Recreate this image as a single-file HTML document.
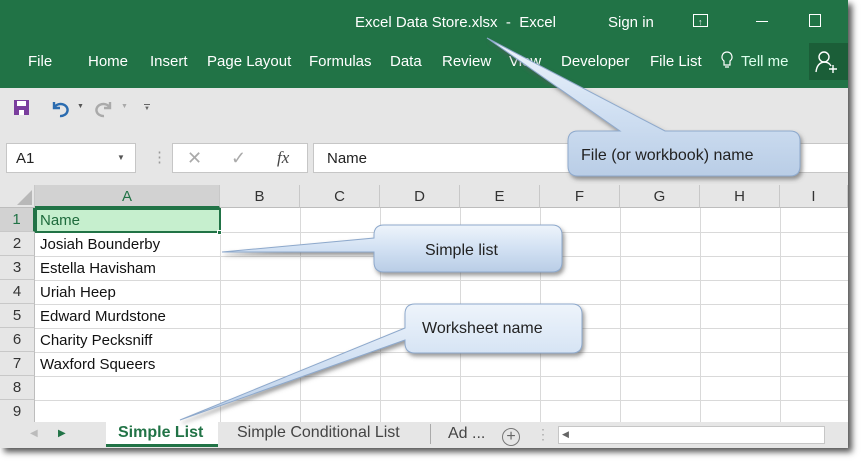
<!DOCTYPE html>
<html><head><meta charset="utf-8"><style>
*{margin:0;padding:0;box-sizing:border-box}
body{width:865px;height:469px;background:#fff;position:relative;overflow:hidden;font-family:"Liberation Sans",sans-serif}
.app{position:absolute;left:0;top:0;width:848px;height:448px;background:#e6e6e6;box-shadow:4px 4px 6px #555;overflow:hidden}
.green{position:absolute;left:0;top:0;width:848px;height:88px;background:#217346;color:#fff}
.t{position:absolute;white-space:nowrap}
.rib span{position:absolute;top:53px;font-size:15px;color:#fff}
.box{position:absolute;background:#fff;border:1px solid #c6c6c6}
.grid{position:absolute;left:0;top:185px;width:848px;height:238px;background:#fff}
.ch{position:absolute;top:0;height:23px;background:#e6e6e6;border-right:1px solid #c8c8c8;border-bottom:1px solid #bdbdbd;text-align:center;font-size:15px;line-height:23px;color:#333}
.rh{position:absolute;left:0;width:35px;height:24px;background:#e6e6e6;border-bottom:1px solid #c8c8c8;border-right:1px solid #bdbdbd;text-align:center;font-size:15px;line-height:24px;color:#333}
.vl{position:absolute;top:23px;width:1px;height:215px;background:#d9d9d9}
.hl{position:absolute;left:35px;width:813px;height:1px;background:#d9d9d9}
.cell{position:absolute;left:40px;font-size:15px;color:#111}
.tabs{position:absolute;left:0;top:422px;width:848px;height:26px;background:#e6e6e6}
</style></head><body>
<div class="app">
 <div class="green">
  <div class="t" style="left:355px;top:14px;font-size:15px">Excel Data Store.xlsx&nbsp; - &nbsp;Excel</div>
  <div class="t" style="left:608px;top:14px;font-size:15px">Sign in</div>
  <div class="t" style="left:693px;top:14px;width:15px;height:13px;border:1px solid #fff"></div>
  <div class="t" style="left:698px;top:17px;font-size:9px">↑</div>
  <div class="t" style="left:756px;top:21px;width:12px;height:1px;background:#fff"></div>
  <div class="t" style="left:809px;top:14px;width:12px;height:13px;border:1px solid #fff"></div>
  <div class="rib">
   <span style="left:28px">File</span><span style="left:88px">Home</span><span style="left:150px">Insert</span><span style="left:207px">Page Layout</span><span style="left:309px">Formulas</span><span style="left:390px">Data</span><span style="left:442px">Review</span><span style="left:509px">View</span><span style="left:561px">Developer</span><span style="left:650px">File List</span><span style="left:741px;color:#dfe">Tell me</span>
  </div>
  <svg class="t" style="left:720px;top:50px" width="14" height="22"><path d="M7,2 a5,5 0 0 1 3,9 v4 h-6 v-4 a5,5 0 0 1 3,-9z M5,17 h4" fill="none" stroke="#fff" stroke-width="1.2"/></svg>
  <div class="t" style="left:809px;top:43px;width:39px;height:37px;background:#1b5e38"></div>
  <svg class="t" style="left:814px;top:49px" width="26" height="26"><circle cx="10" cy="8" r="5" fill="none" stroke="#fff" stroke-width="1.4"/><path d="M2,23 q1,-9 8,-10 q5,0 7,4" fill="none" stroke="#fff" stroke-width="1.4"/><path d="M15,20 h8 M19,16 v8" stroke="#fff" stroke-width="1.4"/></svg>
 </div>
 <svg class="t" style="left:14px;top:100px" width="16" height="16"><rect x="0" y="0" width="15" height="15" fill="#7a3e9d"/><rect x="3" y="1" width="9" height="5" fill="#fff"/><rect x="5" y="10" width="5" height="5" fill="#fff"/></svg>
 <svg class="t" style="left:50px;top:98px" width="22" height="20"><path d="M4,4 v6 h6 M4,10 a7,6 0 1 1 6,8" fill="none" stroke="#2b6cb0" stroke-width="2.4"/></svg>
 <svg class="t" style="left:93px;top:98px" width="22" height="20"><path d="M17,4 v6 h-6 M17,10 a7,6 0 1 0 -6,8" fill="none" stroke="#aaa" stroke-width="2.4"/></svg>
 <div class="t" style="left:77px;top:103px;font-size:7px;color:#555">▼</div>
 <div class="t" style="left:121px;top:103px;font-size:7px;color:#aaa">▼</div>
 <div class="t" style="left:144px;top:104px;width:6px;height:1px;background:#666"></div>
 <div class="t" style="left:144px;top:106px;font-size:6px;color:#666">▼</div>
 <div class="box" style="left:6px;top:143px;width:130px;height:30px"><span class="t" style="left:9px;top:6px;font-size:15px;color:#222">A1</span><span class="t" style="left:110px;top:9px;font-size:8px;color:#555">▼</span></div>
 <div class="t" style="left:152px;top:148px;font-size:15px;color:#999">⋮</div>
 <div class="box" style="left:172px;top:143px;width:136px;height:30px"><span class="t" style="left:14px;top:4px;font-size:18px;color:#aaa">✕</span><span class="t" style="left:58px;top:4px;font-size:18px;color:#aaa">✓</span><span class="t" style="left:104px;top:4px;font-size:17px;color:#444;font-style:italic;font-family:'Liberation Serif',serif">fx</span></div>
 <div class="box" style="left:313px;top:143px;width:540px;height:30px"><span class="t" style="left:13px;top:6px;font-size:15px;color:#222">Name</span></div>
 <div class="grid">
  <div class="ch" style="left:0;width:35px;background:#e6e6e6"></div>
  <svg class="t" style="left:15px;top:5px" width="18" height="16"><polygon points="17,0 17,15 2,15" fill="#b8b8b8"/></svg>
  <div class="ch" style="left:35px;width:185px;background:#d2d2d2;color:#217346;border-bottom:2px solid #217346">A</div>
  <div class="ch" style="left:220px;width:80px">B</div><div class="ch" style="left:300px;width:80px">C</div><div class="ch" style="left:380px;width:80px">D</div><div class="ch" style="left:460px;width:80px">E</div><div class="ch" style="left:540px;width:80px">F</div><div class="ch" style="left:620px;width:80px">G</div><div class="ch" style="left:700px;width:80px">H</div><div class="ch" style="left:780px;width:68px">I</div>
  <div class="rh" style="top:23px;background:#d2d2d2;color:#217346;border-right:2px solid #217346">1</div>
  <div class="rh" style="top:47px">2</div><div class="rh" style="top:71px">3</div><div class="rh" style="top:95px">4</div><div class="rh" style="top:119px">5</div><div class="rh" style="top:143px">6</div><div class="rh" style="top:167px">7</div><div class="rh" style="top:191px">8</div><div class="rh" style="top:215px">9</div>
  <div class="vl" style="left:220px"></div><div class="vl" style="left:300px"></div><div class="vl" style="left:380px"></div><div class="vl" style="left:460px"></div><div class="vl" style="left:540px"></div><div class="vl" style="left:620px"></div><div class="vl" style="left:700px"></div><div class="vl" style="left:780px"></div>
  <div class="hl" style="top:47px"></div><div class="hl" style="top:71px"></div><div class="hl" style="top:95px"></div><div class="hl" style="top:119px"></div><div class="hl" style="top:143px"></div><div class="hl" style="top:167px"></div><div class="hl" style="top:191px"></div><div class="hl" style="top:215px"></div>
  <div class="t" style="left:35px;top:23px;width:186px;height:25px;background:#c6efce;border:2px solid #217346"></div>
  <div class="t" style="left:217px;top:45px;width:5px;height:5px;background:#217346;border:1px solid #fff"></div>
  <div class="cell" style="top:27px;color:#1e6b3c">Name</div>
  <div class="cell" style="top:51px">Josiah Bounderby</div><div class="cell" style="top:75px">Estella Havisham</div><div class="cell" style="top:99px">Uriah Heep</div><div class="cell" style="top:123px">Edward Murdstone</div><div class="cell" style="top:147px">Charity Pecksniff</div><div class="cell" style="top:171px">Waxford Squeers</div>
 </div>
 <div class="tabs">
  <div class="t" style="left:30px;top:6px;font-size:10px;color:#bbb">◀</div>
  <div class="t" style="left:58px;top:6px;font-size:10px;color:#217346">▶</div>
  <div class="t" style="left:106px;top:-1px;width:112px;height:26px;background:#fff;border-bottom:3px solid #217346"></div>
  <div class="t" style="left:118px;top:2px;font-size:16px;font-weight:bold;color:#217346">Simple List</div>
  <div class="t" style="left:237px;top:2px;font-size:16px;color:#444">Simple Conditional List</div>
  <div class="t" style="left:430px;top:2px;width:1px;height:20px;background:#aaa"></div>
  <div class="t" style="left:448px;top:3px;font-size:16px;color:#444">Ad ...</div>
  <div class="t" style="left:502px;top:6px;width:18px;height:18px;border:1px solid #777;border-radius:50%;text-align:center;line-height:15px;font-size:16px;color:#666">+</div>
  <div class="t" style="left:536px;top:4px;font-size:14px;color:#aaa">⋮</div>
  <div class="t" style="left:558px;top:4px;width:267px;height:18px;background:#fff;border:1px solid #c6c6c6"></div>
  <div class="t" style="left:562px;top:7px;font-size:9px;color:#666">◀</div>
 </div>
</div>
<svg width="865" height="469" style="position:absolute;left:0;top:0">
 <defs>
  <linearGradient id="g" x1="0" y1="0" x2="0" y2="1"><stop offset="0" stop-color="#eef4fb"/><stop offset="0.5" stop-color="#d2e1f3"/><stop offset="1" stop-color="#b9cde6"/></linearGradient>
  <filter id="s"><feDropShadow dx="2" dy="3" stdDeviation="2" flood-color="#555" flood-opacity="0.6"/></filter>
 </defs>
 <g filter="url(#s)" fill="url(#g)" stroke="#8ea9cc" stroke-width="1">
  <path d="M578,131 L620,131 L487,38 L665,131 L790,131 Q800,131 800,141 L800,166 Q800,176 790,176 L578,176 Q568,176 568,166 L568,141 Q568,131 578,131Z"/>
  <path d="M384,225 L552,225 Q562,225 562,235 L562,262 Q562,272 552,272 L384,272 Q374,272 374,262 L374,252 L222,252 L374,238 L374,235 Q374,225 384,225Z"/>
  <path d="M415,304 L572,304 Q582,304 582,314 L582,343 Q582,353 572,353 L415,353 Q405,353 405,343 L405,340 L180,420 L405,328 L405,314 Q405,304 415,304Z"/>
 </g>
 <g font-family="Liberation Sans" font-size="16" fill="#222">
  <text x="581" y="160">File (or workbook) name</text>
  <text x="425" y="255">Simple list</text>
  <text x="422" y="333">Worksheet name</text>
 </g>
</svg>
</body></html>
